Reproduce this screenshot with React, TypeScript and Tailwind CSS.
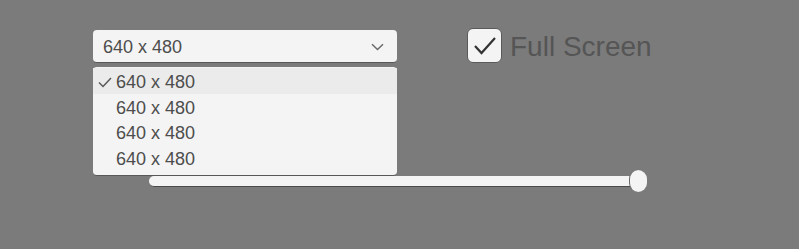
import { useState } from "react"

const options = ["640 x 480", "640 x 480", "640 x 480", "640 x 480"]

export default function App() {
  const [selected] = useState(0)

  return (
    <div className="relative h-[249px] w-full bg-[#7b7b7b] font-['Liberation_Sans',Arial,sans-serif]">
      <div className="flex items-start pt-[28px]">
        {/* dropdown */}
        <div className="relative ml-[93px] mt-[2px] w-[304px]">
          <div className="flex h-[33px] items-center justify-between rounded-[4px] border-b border-[#585858] bg-[#f4f4f4] pl-[10px] pr-[12px] text-[18px] text-[#4d4d4d]">
            <span className="pt-[3px]">640 x 480</span>
            <svg width="13" height="8" viewBox="0 0 13 8" className="mr-[1px] mt-[2px]">
              <path d="M1 1.2 L6.5 6.5 L12 1.2" fill="none" stroke="#6a6a6a" strokeWidth="1.5" />
            </svg>
          </div>
          <div className="absolute left-0 top-[37px] z-10 w-full rounded-[4px] border-b border-[#585858] bg-[#f4f4f4] pb-[5px] pt-[1px]">
            {options.map((o, i) => (
              <div
                key={i}
                className={`flex h-[25.5px] items-center pt-[4px] text-[18px] text-[#4d4d4d] ${i === selected ? "bg-[#ebebeb]" : ""}`}
              >
                <span className="flex w-[23px] justify-center pl-[1px]">
                  {i === selected && (
                    <svg width="14" height="11" viewBox="0 0 14 11">
                      <path d="M1 5.5 L5 9.5 L13 1" fill="none" stroke="#555" strokeWidth="1.4" />
                    </svg>
                  )}
                </span>
                <span>{o}</span>
              </div>
            ))}
          </div>
        </div>

        {/* full screen toggle */}
        <div className="ml-[70px] flex items-center gap-[8px]">
          <div className="flex h-[35px] w-[35px] items-center justify-center rounded-[6px] border border-[#5a5a5a] bg-[#f4f4f4]">
            <svg width="24" height="20" viewBox="0 0 24 20">
              <path d="M2 10 L8.5 17 L22 2" fill="none" stroke="#333" strokeWidth="2.2" />
            </svg>
          </div>
          <span className="pt-[2px] text-[28px] leading-none text-[#555555]">Full Screen</span>
        </div>
      </div>

      {/* slider */}
      <div className="ml-[149px] mt-[107px] flex h-[22px] w-[498px] items-center">
        <div className="h-[11px] flex-1 rounded-l-[5px] border-b border-[#4a4a4a] bg-[#f4f4f4]" />
        <div className="-ml-[5px] h-[22px] w-[18px] rounded-full border-l border-[#6a6a6a] bg-[#f4f4f4]" />
      </div>
    </div>
  )
}
